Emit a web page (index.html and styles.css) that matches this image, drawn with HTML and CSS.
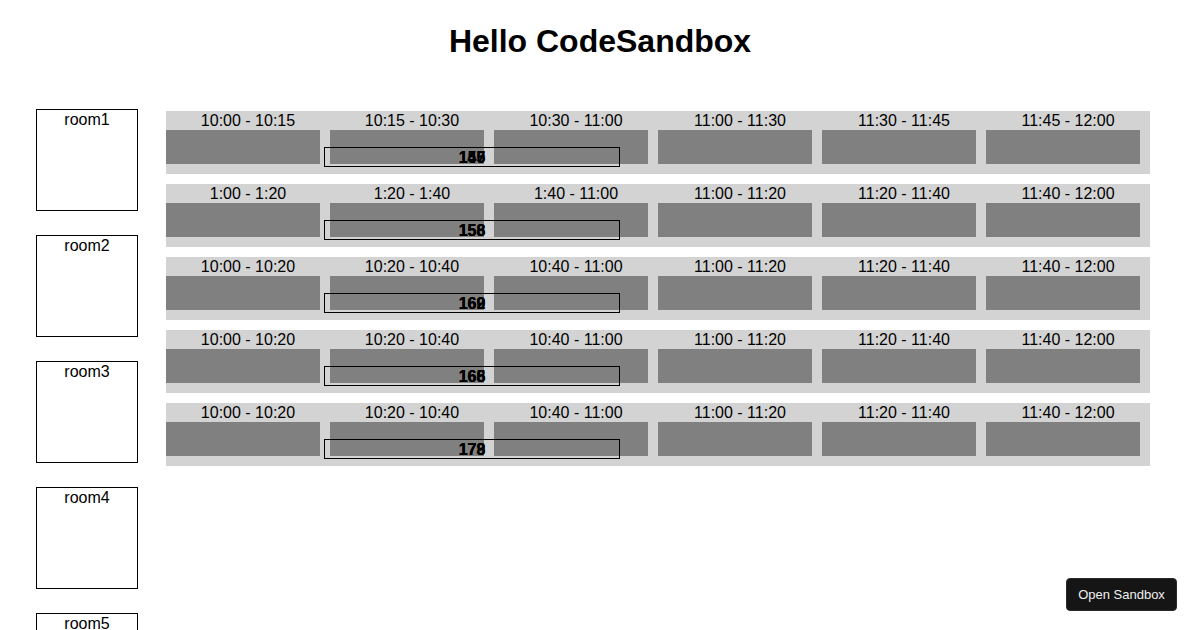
FILE: index.html
```html
<!DOCTYPE html>
<html>
<head>
<meta charset="utf-8">
<link rel="stylesheet" href="styles.css">
</head>
<body>
<h1 class="title">Hello CodeSandbox</h1>
<div class="main">
  <div class="rooms">
    <div class="room">room1</div>
    <div class="room">room2</div>
    <div class="room">room3</div>
    <div class="room">room4</div>
    <div class="room">room5</div>
  </div>
  <div class="schedule">
    <div class="band">
      <div class="cell"><div class="label">10:00 - 10:15</div><div class="block"></div></div>
      <div class="cell"><div class="label">10:15 - 10:30</div><div class="block"></div></div>
      <div class="cell"><div class="label">10:30 - 11:00</div><div class="block"></div></div>
      <div class="cell"><div class="label">11:00 - 11:30</div><div class="block"></div></div>
      <div class="cell"><div class="label">11:30 - 11:45</div><div class="block"></div></div>
      <div class="cell"><div class="label">11:45 - 12:00</div><div class="block"></div></div>
      <div class="event"><span>145</span><span>150</span><span>147</span></div>
    </div>
    <div class="band">
      <div class="cell"><div class="label">1:00 - 1:20</div><div class="block"></div></div>
      <div class="cell"><div class="label">1:20 - 1:40</div><div class="block"></div></div>
      <div class="cell"><div class="label">1:40 - 11:00</div><div class="block"></div></div>
      <div class="cell"><div class="label">11:00 - 11:20</div><div class="block"></div></div>
      <div class="cell"><div class="label">11:20 - 11:40</div><div class="block"></div></div>
      <div class="cell"><div class="label">11:40 - 12:00</div><div class="block"></div></div>
      <div class="event"><span>153</span><span>158</span><span>156</span></div>
    </div>
    <div class="band">
      <div class="cell"><div class="label">10:00 - 10:20</div><div class="block"></div></div>
      <div class="cell"><div class="label">10:20 - 10:40</div><div class="block"></div></div>
      <div class="cell"><div class="label">10:40 - 11:00</div><div class="block"></div></div>
      <div class="cell"><div class="label">11:00 - 11:20</div><div class="block"></div></div>
      <div class="cell"><div class="label">11:20 - 11:40</div><div class="block"></div></div>
      <div class="cell"><div class="label">11:40 - 12:00</div><div class="block"></div></div>
      <div class="event"><span>160</span><span>169</span><span>162</span></div>
    </div>
    <div class="band">
      <div class="cell"><div class="label">10:00 - 10:20</div><div class="block"></div></div>
      <div class="cell"><div class="label">10:20 - 10:40</div><div class="block"></div></div>
      <div class="cell"><div class="label">10:40 - 11:00</div><div class="block"></div></div>
      <div class="cell"><div class="label">11:00 - 11:20</div><div class="block"></div></div>
      <div class="cell"><div class="label">11:20 - 11:40</div><div class="block"></div></div>
      <div class="cell"><div class="label">11:40 - 12:00</div><div class="block"></div></div>
      <div class="event"><span>165</span><span>166</span><span>168</span></div>
    </div>
    <div class="band">
      <div class="cell"><div class="label">10:00 - 10:20</div><div class="block"></div></div>
      <div class="cell"><div class="label">10:20 - 10:40</div><div class="block"></div></div>
      <div class="cell"><div class="label">10:40 - 11:00</div><div class="block"></div></div>
      <div class="cell"><div class="label">11:00 - 11:20</div><div class="block"></div></div>
      <div class="cell"><div class="label">11:20 - 11:40</div><div class="block"></div></div>
      <div class="cell"><div class="label">11:40 - 12:00</div><div class="block"></div></div>
      <div class="event"><span>173</span><span>178</span><span>179</span></div>
    </div>
  </div>
</div>
<a class="open-btn">Open Sandbox</a>
</body>
</html>
```
FILE: styles.css
```css
html, body {
  margin: 0;
  padding: 0;
  background: #fff;
  font-family: "Liberation Sans", Arial, sans-serif;
  color: #000;
  overflow: hidden;
}
.title {
  margin: 0;
  padding-top: 23px;
  font-size: 32px;
  line-height: 37px;
  font-weight: bold;
  text-align: center;
}
.main {
  display: flex;
  align-items: flex-start;
  margin-top: 49px;
  padding-left: 36px;
  gap: 28px;
}
.rooms {
  display: flex;
  flex-direction: column;
  gap: 24px;
  flex: none;
}
.room {
  width: 100px;
  height: 99px;
  border: 1px solid #000;
  text-align: center;
  font-size: 16px;
  line-height: 18px;
  padding-top: 1px;
}
.schedule {
  display: flex;
  flex-direction: column;
  gap: 10px;
  padding-top: 2px;
  width: 984px;
}
.band {
  position: relative;
  display: flex;
  background: #d3d3d3;
  padding-bottom: 10px;
}
.cell {
  width: 164px;
  flex: none;
}
.label {
  height: 19px;
  font-size: 16px;
  line-height: 20px;
  text-align: center;
}
.block {
  width: 154px;
  height: 34px;
  background: #808080;
}
.event {
  position: absolute;
  left: 158px;
  top: 36px;
  width: 294px;
  height: 18px;
  border: 1px solid #000;
  display: grid;
  justify-items: center;
  font-weight: bold;
  font-size: 16px;
  line-height: 19px;
}
.event span {
  grid-area: 1 / 1;
}
.open-btn {
  position: fixed;
  right: 23px;
  bottom: 19px;
  width: 111px;
  height: 33px;
  box-sizing: border-box;
  background: #151515;
  color: #f0f0f0;
  border-radius: 4px;
  font-size: 13px;
  line-height: 31px;
  text-align: center;
  border: 1px solid #2a2a2a;
}
```
